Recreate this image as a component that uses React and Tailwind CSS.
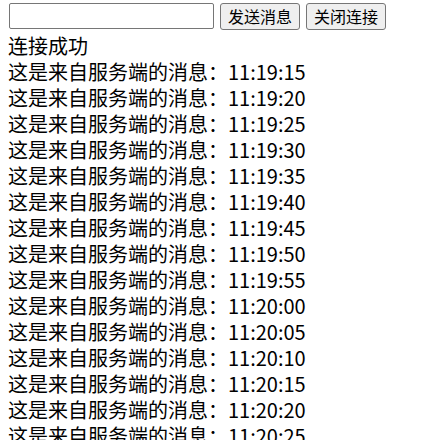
import React from 'react'

const times = [
  '11:19:15', '11:19:20', '11:19:25', '11:19:30', '11:19:35', '11:19:40', '11:19:45', '11:19:50',
  '11:19:55', '11:20:00', '11:20:05', '11:20:10', '11:20:15', '11:20:20', '11:20:25',
]

export default function App() {
  return (
    <div className="px-2 pt-[3px] text-black font-['Noto_Sans_CJK_SC']">
      <div className="flex items-start gap-[6px]">
        <input
          type="text"
          className="w-[205px] h-[26px] ml-px border border-[#767676] rounded-[2px] bg-white outline-none px-1 text-sm"
        />
        <button type="button" className="h-[27px] w-[80px] border border-[#767676] rounded-[3px] bg-[#efefef] text-[16px] leading-[25px]">
          发送消息
        </button>
        <button type="button" className="h-[27px] w-[80px] border border-[#767676] rounded-[3px] bg-[#efefef] text-[16px] leading-[25px]">
          关闭连接
        </button>
      </div>
      <div className="mt-[3px] text-[20px] leading-[26px]">
        <div>连接成功</div>
        {times.map(t => (
          <div key={t}>这是来自服务端的消息：{t}</div>
        ))}
      </div>
    </div>
  )
}
